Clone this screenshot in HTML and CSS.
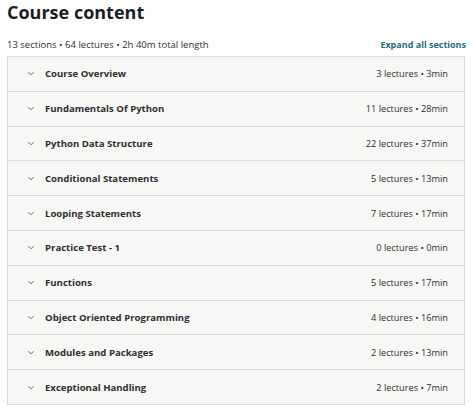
FILE: index.html
```html
<!DOCTYPE html>
<html>
<head>
<meta charset="utf-8">
<link rel="stylesheet" href="styles.css">
</head>
<body>
<div class="page">
  <h2 class="title">Course content</h2>
  <div class="meta">
    <span class="summary">13 sections • 64 lectures • 2h 40m total length</span>
    <span class="expand">Expand all sections</span>
  </div>
  <div class="sections">
    <div class="row"><svg class="chev" viewBox="0 0 10 6"><path d="M1.5 1.5 L5 4.5 L8.5 1.5"/></svg><span class="name">Course Overview</span><span class="info">3 lectures • 3min</span></div>
    <div class="row"><svg class="chev" viewBox="0 0 10 6"><path d="M1.5 1.5 L5 4.5 L8.5 1.5"/></svg><span class="name">Fundamentals Of Python</span><span class="info">11 lectures • 28min</span></div>
    <div class="row"><svg class="chev" viewBox="0 0 10 6"><path d="M1.5 1.5 L5 4.5 L8.5 1.5"/></svg><span class="name">Python Data Structure</span><span class="info">22 lectures • 37min</span></div>
    <div class="row"><svg class="chev" viewBox="0 0 10 6"><path d="M1.5 1.5 L5 4.5 L8.5 1.5"/></svg><span class="name">Conditional Statements</span><span class="info">5 lectures • 13min</span></div>
    <div class="row"><svg class="chev" viewBox="0 0 10 6"><path d="M1.5 1.5 L5 4.5 L8.5 1.5"/></svg><span class="name">Looping Statements</span><span class="info">7 lectures • 17min</span></div>
    <div class="row"><svg class="chev" viewBox="0 0 10 6"><path d="M1.5 1.5 L5 4.5 L8.5 1.5"/></svg><span class="name">Practice Test - 1</span><span class="info">0 lectures • 0min</span></div>
    <div class="row"><svg class="chev" viewBox="0 0 10 6"><path d="M1.5 1.5 L5 4.5 L8.5 1.5"/></svg><span class="name">Functions</span><span class="info">5 lectures • 17min</span></div>
    <div class="row"><svg class="chev" viewBox="0 0 10 6"><path d="M1.5 1.5 L5 4.5 L8.5 1.5"/></svg><span class="name">Object Oriented Programming</span><span class="info">4 lectures • 16min</span></div>
    <div class="row"><svg class="chev" viewBox="0 0 10 6"><path d="M1.5 1.5 L5 4.5 L8.5 1.5"/></svg><span class="name">Modules and Packages</span><span class="info">2 lectures • 13min</span></div>
    <div class="row"><svg class="chev" viewBox="0 0 10 6"><path d="M1.5 1.5 L5 4.5 L8.5 1.5"/></svg><span class="name">Exceptional Handling</span><span class="info">2 lectures • 7min</span></div>
  </div>
</div>
</body>
</html>
```
FILE: styles.css
```css
html, body {
  margin: 0;
  padding: 0;
  background: #ffffff;
}
body {
  font-family: "Open Sans", "Noto Sans", sans-serif;
  color: #1c1d1f;
}
.page {
  padding: 0 9px 0 7px;
}
.title {
  margin: 0;
  padding-top: 1px;
  font-size: 18px;
  line-height: 22px;
  font-weight: 700;
  color: #1c1d1f;
}
.meta {
  display: flex;
  justify-content: space-between;
  align-items: center;
  margin-top: 11px;
  height: 20px;
  font-size: 9.5px;
}
.summary {
  color: #2d2f31;
}
.expand {
  color: #1d6e7c;
  font-weight: 700;
  font-size: 9px;
  margin-right: -1px;
}
.sections {
  margin-top: 2px;
  border: 1px solid #dcdcd8;
  border-bottom: none;
}
.row {
  display: flex;
  align-items: center;
  height: 33.8px;
  background: #f7f7f5;
  border-bottom: 1px solid #dcdcd8;
  padding: 0 16px 0 19px;
}
.chev {
  width: 8px;
  height: 5px;
  fill: none;
  stroke: #6a6f73;
  stroke-width: 1.2;
  margin-right: 10px;
}
.name {
  flex: 1;
  font-size: 9.6px;
  font-weight: 700;
  color: #2d2f31;
}
.info {
  font-size: 9.2px;
  color: #2d2f31;
}
```
